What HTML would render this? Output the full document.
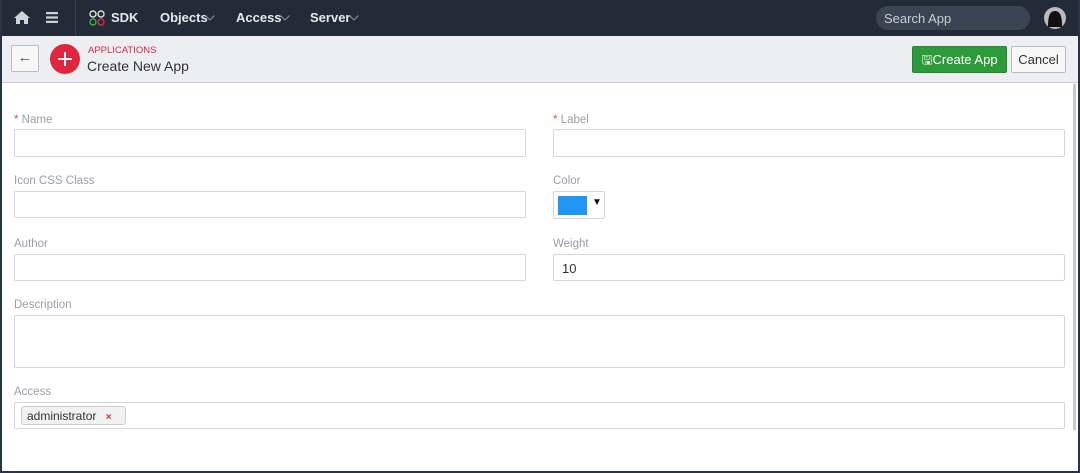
<!DOCTYPE html>
<html><head><meta charset="utf-8"><style>
*{box-sizing:border-box;margin:0;padding:0}
body{width:1080px;height:473px;overflow:hidden;background:#fff;font-family:"Liberation Sans",sans-serif;position:relative}
.frame{position:absolute;left:0;top:0;width:1080px;height:473px;border-left:2px solid #283445;border-bottom:2px solid #283445;border-right:2px solid #283445;pointer-events:none}
.nav{position:absolute;left:0;top:0;width:1080px;height:36px;background:#232b38;color:#e6e8ec;font-size:13px;font-weight:bold}
.nav span{position:absolute;top:10px}
.sep{position:absolute;left:75px;top:0;width:1px;height:36px;background:#3a4352}
.search{position:absolute;left:876px;top:6px;width:154px;height:24px;border-radius:12px;background:#3b4452;color:#c9cdd3;font-size:13px;font-weight:normal;padding:5px 8px}
.hdr{position:absolute;left:0;top:36px;width:1080px;height:47px;background:#eceef1;border-bottom:1px solid #c9ccd1}
.back{position:absolute;left:11px;top:9px;width:28px;height:27px;border:1px solid #b8bcc2;border-radius:2px;background:#f7f7f8;color:#555;text-align:center;font-size:15px;line-height:24px}
.plus{position:absolute;left:50px;top:8px;width:30px;height:30px;border-radius:50%;background:#e0263f}
.btn{position:absolute;top:10px;height:27px;border-radius:2px;font-size:13px;line-height:25px;text-align:center}
label{position:absolute;font-size:11.5px;color:#9a9ea5}
label b{color:#e24a5a;font-weight:normal}
.in{position:absolute;border:1px solid #d3d6da;border-radius:2px;background:#fff;font-size:13px;color:#333;padding:6px 8px}
</style></head><body>
<div class="nav">
<svg style="position:absolute;left:14px;top:11px" width="16" height="13" viewBox="0 0 16 13"><path d="M8 0L0 7h2v6h4V9h4v4h4V7h2z" fill="#cfd3d8"/></svg>
<svg style="position:absolute;left:46px;top:12px" width="12" height="11"><rect y="0" width="12" height="2.2" fill="#cfd3d8"/><rect y="4.4" width="12" height="2.2" fill="#cfd3d8"/><rect y="8.8" width="12" height="2.2" fill="#cfd3d8"/></svg>
<div class="sep"></div>
<svg style="position:absolute;left:89px;top:10px" width="16" height="16"><circle cx="4" cy="4" r="3" fill="none" stroke="#ddd" stroke-width="1.4"/><circle cx="12" cy="4" r="3" fill="none" stroke="#ddd" stroke-width="1.4"/><circle cx="4" cy="12" r="3" fill="none" stroke="#3fae49" stroke-width="1.4"/><circle cx="12" cy="12" r="3" fill="none" stroke="#e0263f" stroke-width="1.4"/></svg>
<span style="left:111px">SDK</span>
<span style="left:160px">Objects</span><svg style="position:absolute;left:205px;top:15px" width="10" height="6"><path d="M0.5 0.5L5 5L9.5 0.5" fill="none" stroke="#8a93a0"/></svg>
<span style="left:236px">Access</span><svg style="position:absolute;left:280px;top:15px" width="10" height="6"><path d="M0.5 0.5L5 5L9.5 0.5" fill="none" stroke="#8a93a0"/></svg>
<span style="left:310px">Server</span><svg style="position:absolute;left:349px;top:15px" width="10" height="6"><path d="M0.5 0.5L5 5L9.5 0.5" fill="none" stroke="#8a93a0"/></svg>
<div class="search">Search App</div>
<svg style="position:absolute;left:1043px;top:6px" width="24" height="24"><circle cx="12" cy="12" r="11" fill="#bbb"/><path d="M5 21C5 12 6 5 12 5S19 12 19 21Z" fill="#111"/></svg>
</div>
<div class="hdr">
<div class="back">←</div>
<div class="plus"><svg width="30" height="30"><path d="M15 8V22M8 15H22" stroke="#fff" stroke-width="2"/></svg></div>
<div style="position:absolute;left:88px;top:9px;font-size:9.5px;color:#e0263f">APPLICATIONS</div>
<div style="position:absolute;left:87px;top:22px;font-size:14px;color:#333">Create New App</div>
<div class="btn" style="left:912px;width:95px;background:#2e9b3a;border:1px solid #268530;color:#fff">&#x1F5AB;Create App</div>
<div class="btn" style="left:1011px;width:55px;background:#f7f7f8;border:1px solid #b8bcc2;color:#333">Cancel</div>
</div>
<div style="position:absolute;left:1073px;top:84px;width:3px;height:346px;background:#c8c8c8"></div>
<label style="left:14px;top:114px"><b>*</b> Name</label>
<div class="in" style="left:14px;top:129px;width:512px;height:28px"></div>
<label style="left:553px;top:114px"><b>*</b> Label</label>
<div class="in" style="left:553px;top:129px;width:512px;height:28px"></div>
<label style="left:14px;top:175px">Icon CSS Class</label>
<div class="in" style="left:14px;top:191px;width:512px;height:27px"></div>
<label style="left:553px;top:175px">Color</label>
<div class="in" style="left:553px;top:191px;width:52px;height:28px;padding:0"><div style="position:absolute;left:4px;top:4px;width:29px;height:19px;background:#2196f3"></div><div style="position:absolute;left:38px;top:5px;font-size:10px;color:#111">▼</div></div>
<label style="left:14px;top:238px">Author</label>
<div class="in" style="left:14px;top:254px;width:512px;height:27px"></div>
<label style="left:553px;top:238px">Weight</label>
<div class="in" style="left:553px;top:254px;width:512px;height:27px">10</div>
<label style="left:14px;top:299px">Description</label>
<div class="in" style="left:14px;top:315px;width:1051px;height:53px"></div>
<label style="left:14px;top:386px">Access</label>
<div class="in" style="left:14px;top:402px;width:1051px;height:27px;padding:0"><div style="position:absolute;left:6px;top:3px;width:105px;height:19px;border:1px solid #ccc;border-radius:3px;background:#f1f1f1;font-size:12px;color:#333;padding:2px 5px">administrator <span style="color:#e0263f;font-size:10px;margin-left:6px;font-weight:bold">×</span></div></div>
<div class="frame"></div>
</body></html>
